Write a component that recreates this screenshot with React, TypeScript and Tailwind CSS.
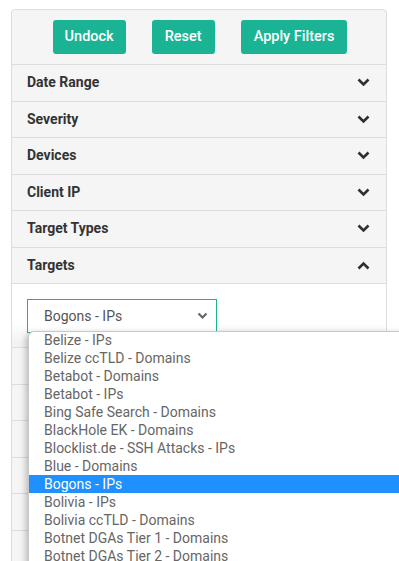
import React from "react";

const sections = ["Date Range", "Severity", "Devices", "Client IP", "Target Types"];
// rows hidden behind the open select list
const hiddenRows = 6;

const options = [
  "Belize - IPs",
  "Belize ccTLD - Domains",
  "Betabot - Domains",
  "Betabot - IPs",
  "Bing Safe Search - Domains",
  "BlackHole EK - Domains",
  "Blocklist.de - SSH Attacks - IPs",
  "Blue - Domains",
  "Bogons - IPs",
  "Bolivia - IPs",
  "Bolivia ccTLD - Domains",
  "Botnet DGAs Tier 1 - Domains",
  "Botnet DGAs Tier 2 - Domains",
];

function Chevron({up}: {up?: boolean}) {
  return (
    <svg width="13" height="9" viewBox="0 0 13 9" className="text-[#2f2f2f]">
      <path
        d={up ? "M1.5 7.5 L6.5 2.5 L11.5 7.5" : "M1.5 1.5 L6.5 6.5 L11.5 1.5"}
        fill="none"
        stroke="currentColor"
        strokeWidth="2.6"
      />
    </svg>
  );
}

function SectionRow({title, up}: {title?: string; up?: boolean}) {
  return (
    <div className="flex h-[36.5px] items-center justify-between border-t border-[#dddddd] pl-[15px] pr-[16px]">
      <span className="text-[14px] font-bold text-[#333333]">{title}</span>
      {title && <Chevron up={up} />}
    </div>
  );
}

export default function App() {
  return (
    <div className="relative h-[561px] w-[399px] overflow-hidden bg-white font-['Roboto',sans-serif]">
      <div className="ml-[11px] mt-[9px] w-[376px] rounded-t-[4px] border border-[#dddddd] bg-[#f5f5f5]">
        <div className="flex h-[54px] items-center justify-center gap-[26px] pl-[2px]">
          <button className="h-[34px] rounded-[3px] bg-[#1ab394] px-[12px] text-[14.5px] font-medium text-white">Undock</button>
          <button className="h-[34px] rounded-[3px] bg-[#1ab394] px-[13px] text-[14.5px] font-medium text-white">Reset</button>
          <button className="h-[34px] rounded-[3px] bg-[#1ab394] px-[13px] text-[14.5px] font-medium text-white">Apply Filters</button>
        </div>
        {sections.map((s) => (
          <SectionRow key={s} title={s} />
        ))}
        <SectionRow title="Targets" up />
        <div className="h-[64px] rounded-b-[4px] border-t border-[#dddddd] bg-gradient-to-b from-white from-60% to-[#f0f0f0] px-[15px] pt-[15px]">
          <div className="flex h-[34px] w-[190px] items-center justify-between border border-[#1ab394] bg-white pl-[16px] pr-[8px]">
            <span className="text-[14px] text-[#555555]">Bogons - IPs</span>
            <svg width="11" height="8" viewBox="0 0 11 8" className="text-[#666666]">
              <path d="M1.5 1.5 L5.5 5.5 L9.5 1.5" fill="none" stroke="currentColor" strokeWidth="2.2" />
            </svg>
          </div>
        </div>
        {Array.from({length: hiddenRows}).map((_, i) => (
          <SectionRow key={i} />
        ))}
      </div>

      <div className="absolute left-[28px] top-[331px] w-[400px] overflow-hidden rounded-tl-[6px] border-l border-t border-[#c8c8c8] bg-white shadow-[-2px_2px_6px_rgba(0,0,0,0.25)]">
        <div className="-mt-[1px]">
          {options.map((o) => (
            <div
              key={o}
              className={
                o === "Bogons - IPs"
                  ? "flex h-[18px] items-center bg-[#1e90ff] pl-[15px] text-[14px] text-white"
                  : "flex h-[18px] items-center pl-[15px] text-[14px] text-[#666666]"
              }
            >
              {o}
            </div>
          ))}
        </div>
      </div>
    </div>
  );
}
